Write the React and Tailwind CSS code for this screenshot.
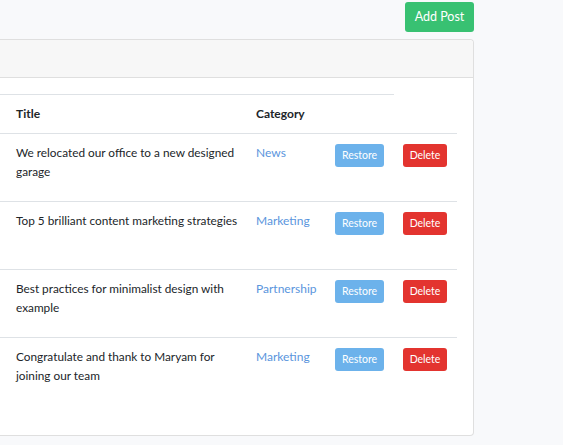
import React from "react";

const rows = [
  { title: ["We relocated our office to a new designed", "garage"], cat: "News" },
  { title: ["Top 5 brilliant content marketing strategies"], cat: "Marketing" },
  { title: ["Best practices for minimalist design with", "example"], cat: "Partnership" },
  { title: ["Congratulate and thank to Maryam for", "joining our team"], cat: "Marketing" },
];

export default function App() {
  return (
    <div
      className="w-[563px] h-[445px] bg-[#f8f9fb] overflow-hidden text-[#212529]"
      style={{ fontFamily: "Lato, 'Noto Sans', sans-serif" }}
    >
      <div className="w-[474px] flex flex-col">
        <div className="flex justify-end pt-[2px] h-[39px]">
          <button className="h-[30px] w-[69px] rounded-[3px] bg-[#38c172] text-white text-[12.5px] leading-none">
            Add Post
          </button>
        </div>
        <div className="h-[397px] bg-white border-y border-r border-[#dfdfdf] rounded-r-[4px] flex flex-col">
          <div className="h-[38px] bg-[#f7f7f7] border-b border-[#dfdfdf] rounded-tr-[4px]" />
          <div className="mt-[16px] w-[394px] h-px bg-[#dee2e6]" />
          <div className="w-[457px]">
            <div className="grid grid-cols-[256px_79px_68px_54px] h-[39px] items-center border-b border-[#dee2e6] font-bold text-[12px]">
              <div className="pl-4">Title</div>
              <div>Category</div>
              <div />
              <div />
            </div>
            {rows.map((r, i) => (
              <div
                key={i}
                className={`grid grid-cols-[256px_79px_68px_54px] h-[68px] items-start pt-[9px] text-[11.8px] leading-[19px] ${i < rows.length - 1 ? "border-b border-[#dee2e6]" : ""}`}
              >
                <div className="pl-4">
                  {r.title.map((t, j) => (
                    <div key={j} className="whitespace-nowrap">{t}</div>
                  ))}
                </div>
                <div className="text-[#5a95dd] text-[12px]">{r.cat}</div>
                <div className="pt-px">
                  <button className="h-[23px] w-[49px] rounded-[3px] bg-[#6cb2eb] text-white text-[10.5px] leading-none">
                    Restore
                  </button>
                </div>
                <div className="pt-px">
                  <button className="h-[23px] w-[44px] rounded-[3px] bg-[#e3342f] text-white text-[10.5px] leading-none">
                    Delete
                  </button>
                </div>
              </div>
            ))}
          </div>
        </div>
      </div>
    </div>
  );
}
